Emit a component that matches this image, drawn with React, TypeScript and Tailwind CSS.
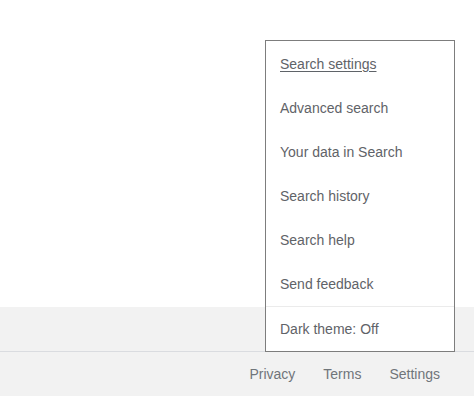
const menuItems = [
  "Search settings",
  "Advanced search",
  "Your data in Search",
  "Search history",
  "Search help",
  "Send feedback",
];

const footerLinks = ["Privacy", "Terms", "Settings"];

export default function App() {
  return (
    <div
      className="relative flex h-[396px] w-full flex-col bg-white text-[14px]"
      style={{ fontFamily: '"Liberation Sans", Arial, sans-serif' }}
    >
      <div className="flex-1" />

      <footer className="bg-[#f2f2f2]">
        <div className="h-[45px] border-b border-[#dadce0]" />
        <div className="flex h-[44px] items-center justify-end pr-[20px]">
          {footerLinks.map((l) => (
            <a key={l} href="#" className="px-[14px] text-[#70757a]">
              {l}
            </a>
          ))}
        </div>
      </footer>

      {/* settings dropdown */}
      <div className="absolute left-[265px] top-[40px] w-[190px] border border-[#7d7d7d] bg-white pt-[1px] text-[#5f6368]">
        {menuItems.map((item, i) => (
          <div key={item} className="flex h-[44px] items-center px-[14px]">
            <span className={i === 0 ? "underline underline-offset-2" : ""}>{item}</span>
          </div>
        ))}
        <div className="border-t border-[#ebebeb]" />
        <div className="flex h-[44px] items-center px-[14px]">Dark theme: Off</div>
      </div>
    </div>
  );
}
